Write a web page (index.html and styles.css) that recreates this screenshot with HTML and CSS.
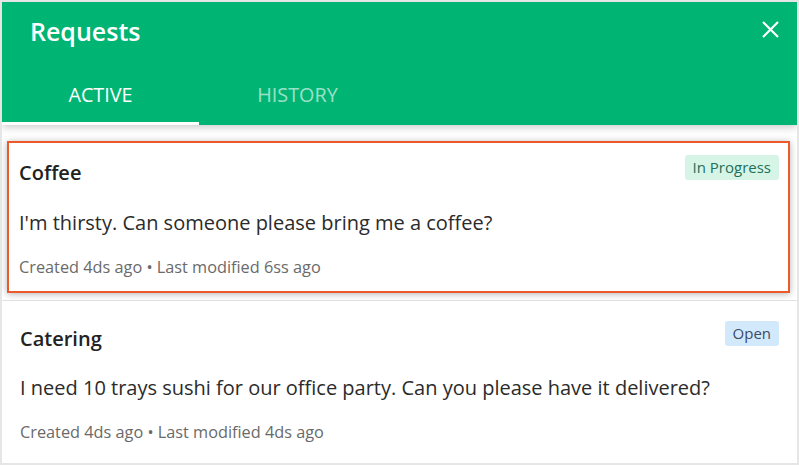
FILE: index.html
```html
<!DOCTYPE html>
<html>
<head>
<meta charset="utf-8">
<link rel="stylesheet" href="styles.css">
</head>
<body>
<div class="panel">
  <header class="hdr">
    <div class="hdr-top">
      <h1 class="hdr-title">Requests</h1>
      <button class="close" aria-label="Close">
        <svg width="17" height="17" viewBox="0 0 17 17"><path d="M1 1 L16 16 M16 1 L1 16" stroke="#fff" stroke-width="2.2" fill="none"/></svg>
      </button>
    </div>
    <nav class="tabs">
      <div class="tab tab-active">ACTIVE</div>
      <div class="tab">HISTORY</div>
    </nav>
  </header>
  <main class="list">
    <div class="item item-selected">
      <div class="card">
        <div class="card-head">
          <div class="card-title">Coffee</div>
          <span class="badge badge-progress">In Progress</span>
        </div>
        <div class="card-body">I'm thirsty. Can someone please bring me a coffee?</div>
        <div class="card-meta">Created 4ds ago • Last modified 6ss ago</div>
      </div>
    </div>
    <div class="item">
      <div class="card">
        <div class="card-head">
          <div class="card-title">Catering</div>
          <span class="badge badge-open">Open</span>
        </div>
        <div class="card-body">I need 10 trays sushi for our office party. Can you please have it delivered?</div>
        <div class="card-meta">Created 4ds ago • Last modified 4ds ago</div>
      </div>
    </div>
  </main>
</div>
</body>
</html>
```
FILE: styles.css
```css
* { box-sizing: border-box; }
html, body { margin: 0; padding: 0; background: #fff; }
body { font-family: "Open Sans", "Noto Sans", sans-serif; }

.panel {
  width: 799px;
  height: 465px;
  border: 2px solid #e6e6e6;
  display: flex;
  flex-direction: column;
  overflow: hidden;
  background: #fff;
}

.hdr {
  position: relative;
  z-index: 1;
  height: 123px;
  background: #00b574;
  display: flex;
  flex-direction: column;
  justify-content: space-between;
  box-shadow: 0 2px 8px rgba(0,0,0,0.22);
  flex: none;
}
.hdr-top {
  display: flex;
  justify-content: space-between;
  align-items: flex-start;
  padding: 12px 18px 0 28px;
}
.hdr-title {
  margin: 0;
  font-size: 25px;
  line-height: 34px;
  font-weight: 600;
  color: #fff;
}
.close {
  margin: 7px 0 0 0;
  padding: 0;
  border: 0;
  background: none;
  width: 17px;
  height: 17px;
  display: block;
}
.close svg { display: block; }

.tabs { display: flex; }
.tab {
  width: 197px;
  height: 48px;
  padding-top: 6px;
  text-align: center;
  font-size: 19.8px;
  line-height: 24px;
  color: rgba(255,255,255,0.62);
  border-bottom: 3px solid transparent;
}
.tab-active {
  color: #fff;
  border-bottom-color: #fff;
}

.list { flex: 1; }
.item { border-bottom: 1px solid #e2e2e2; }
.item:last-child { border-bottom: 0; }
.item-selected { padding: 16px 7px 7px 5px; }
.item .card { padding: 20px 18px 20px 18px; }
.item-selected .card {
  border: 2px solid #ec5a2b;
  padding: 12px 9px 13px 10px;
  box-shadow: 0 1px 7px rgba(0,0,0,0.3);
}

.card-head {
  display: flex;
  justify-content: space-between;
  align-items: flex-start;
}
.card-title {
  margin-top: 5px;
  font-size: 20px;
  line-height: 26px;
  font-weight: 600;
  color: #222;
}
.badge {
  display: inline-block;
  height: 25px;
  line-height: 25px;
  padding: 0 8px;
  font-size: 15px;
  border-radius: 3px;
}
.badge-progress { background: #d6f5e6; color: #23705a; }
.badge-open { background: #d2e9fc; color: #3d4a68; }

.card-body {
  margin-top: 23.5px;
  font-size: 20px;
  line-height: 26px;
  color: #2b2b2b;
}
.item .card-body { margin-top: 22.5px; }
.item-selected .card-body { margin-top: 23.5px; }
.card-meta {
  margin-top: 20.5px;
  font-size: 16.3px;
  line-height: 22px;
  color: #6a6a6a;
}
```
